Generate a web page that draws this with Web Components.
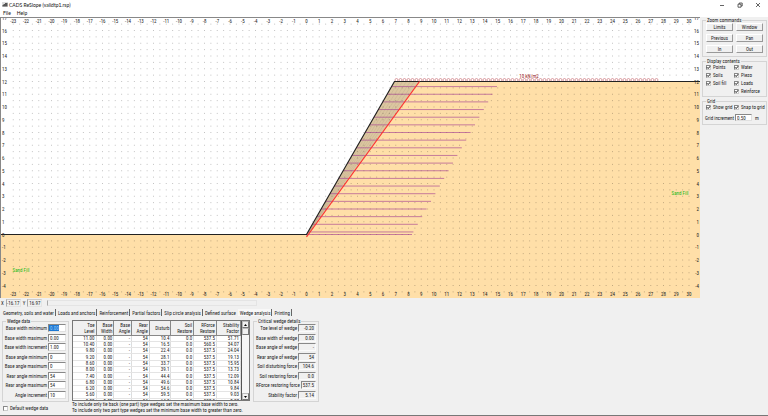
<!DOCTYPE html>
<html lang="en">
<head>
<meta charset="utf-8">
<title>CADS ReSlope (validtp1.rsp)</title>
<style>
  html, body { height: 100%; margin: 0; }
  body {
    display: flex;
    background: #f0f0f0;
    color: #222;
    font: 5px/6px "Roboto Condensed", "Open Sans Condensed", Lato, "Liberation Sans", sans-serif;
  }
</style>
</head>
<body>
<reslope-app></reslope-app>

<script>
// Small helper so every element sets up its shadow root the same way
function attach(el, html) {
  const shadow = el.attachShadow({ mode: "open" });
  shadow.innerHTML = `<style>*{box-sizing:border-box} :host{box-sizing:border-box}</style>${html}`;
  return shadow;
}

// ----- Title bar -----
class TitleBar extends HTMLElement {
  connectedCallback() {
    attach(this, `
      <style>
        :host { display: flex; align-items: center; height: 9px; background: #fff; padding: 0 4px 0 2px;
          font-family: Lato, "Open Sans", sans-serif; }
        .logo { width: 6px; height: 5px; margin-right: 1px; }
        h1 { flex: 1; margin: 0; font-size: 5px; font-weight: 400; color: #111; }
        nav { display: flex; gap: 6px; }
        button { width: 12px; height: 9px; padding: 0; border: 0; background: none; display: grid; place-items: center; }
        button svg { width: 6px; height: 6px; fill: none; stroke: #222; stroke-width: .7; }
      </style>
      <svg class="logo" viewBox="0 0 6 5"><rect width="6" height="5" fill="#ddd"/><path d="M.5 4.500V3h1V2h1.500V1H5.500V4.500Z" fill="#555"/></svg>
      <h1><slot></slot></h1>
      <nav>
        <button aria-label="Minimize"><svg viewBox="0 0 6 6"><path d="M1 3.500H5"/></svg></button>
        <button aria-label="Restore"><svg viewBox="0 0 6 6"><path d="M1 2.200H4V5.200H1ZM2.200 2V1H5.200V4H4"/></svg></button>
        <button aria-label="Close"><svg viewBox="0 0 6 6"><path d="M1 1L5 5M5 1L1 5"/></svg></button>
      </nav>
    `);
  }
}
customElements.define("title-bar", TitleBar);

// ----- Menu bar -----
class MenuBar extends HTMLElement {
  connectedCallback() {
    attach(this, `
      <style>
        :host { display: flex; gap: 4px; height: 8px; padding: 0 2px; background: #fff; align-items: center; }
        button { border: 0; background: none; padding: 0 1px; color: #111; font: 5px/8px Lato, "Open Sans", sans-serif; }
      </style>
      <button>File</button><button>Help</button>
    `);
  }
}
customElements.define("menu-bar", MenuBar);

// ----- Slope drawing -----
const UNIT = 12.75;
const OX = 306.5;
const OY = 217.5;
const px = (m) => OX + m * UNIT;
const py = (m) => OY - m * UNIT;

class SlopeCanvas extends HTMLElement {
  connectedCallback() {
    let dots = "";
    for (let y = -4.5; y <= 16.5; y += 0.5) {
      for (let x = -23; x <= 30; x += 0.5) {
        dots += `M${px(x) - 0.5} ${py(y)}h1`;
      }
    }

    let labels = "";
    for (let x = -23; x <= 30; x++) {
      labels += `<text x="${px(x)}" y="6">${x}</text><text x="${px(x)}" y="279">${x}</text>`;
    }
    for (let y = -4; y <= 17; y++) {
      const ty = py(y) + 2;
      labels += `<text x="2" y="${ty}" class="l">${y}</text><text x="699" y="${ty}" class="r">${y}</text>`;
    }

    // layers of reinforcement, 0.6 m apart, plus one at the toe
    let nails = "";
    for (let i = 0; i < 20; i++) {
      const lvl = 11.6 - i * 0.6;
      nails += `M${px(lvl * 0.575)} ${py(lvl)}H${497 - i * 4.4}`;
    }
    nails += `M${px(0)} ${py(0)}H412`;

    let load = "";
    for (let x = px(6.9); x < 656; x += 4) load += `<circle cx="${x + 2}" cy="63" r="1.500"/>`;

    // hatching of the failing wedge
    let hatch = "";
    for (let i = 1; i < 6; i++) hatch += `M${OX} ${OY + 1}L${px(6.9) + i * 4} ${py(12)}`;

    attach(this, `
      <style>
        :host { display: block; background: #fff; border-left: 1px solid #888; border-top: 1px solid #888; overflow: hidden; min-width: 0; min-height: 0; }
        svg { display: block; width: 100%; height: 100%; }
        text { font-size: 5px; text-anchor: middle; fill: #222; }
        text.l { text-anchor: start; }
        text.r { text-anchor: end; }
        text.soil { fill: #18b818; }
        text.load { fill: #981820; }
      </style>
      <svg viewBox="1 1 699 280" preserveAspectRatio="xMidYMid slice" role="img" aria-label="Slope section">
        <path d="M0 ${OY}H${OX}L${px(6.9)} ${py(12)}H701V282H0Z" fill="#ffdfa8"/>
        <path d="M${OX} ${OY}L${px(6.9)} ${py(12)}H419.500L${OX} ${OY + 2.5}Z" fill="#dcc6a0"/>
        <path d="${hatch}" stroke="#a89880" stroke-width=".4" stroke-opacity=".6"/>
        <path d="${dots}" stroke="#000" stroke-opacity=".24"/>
        <path d="${nails}" stroke="#a03890" stroke-width=".8" stroke-opacity=".75"/>
        <g fill="none" stroke="#b84850" stroke-width=".5">${load}</g>
        <path d="M0 ${OY}H${OX}L${px(6.9)} ${py(12)}H701" fill="none" stroke="#222" stroke-width="1.200"/>
        <path d="M${OX} ${OY + 2.5}L419.500 ${py(12)}" stroke="#ff3030" stroke-width="1.200"/>
        ${labels}
        <text class="soil" x="21" y="255">Sand Fill</text>
        <text class="soil" x="680" y="178">Sand Fill</text>
        <text class="load" x="529" y="61">10 kN/m2</text>
      </svg>
    `);
  }
}
customElements.define("slope-canvas", SlopeCanvas);

// ----- Etched group box -----
class GroupBox extends HTMLElement {
  connectedCallback() {
    attach(this, `
      <style>
        :host { display: block; }
        fieldset { margin: 0; padding: 0 2px 2px; border: 1px solid #d4d4d4; min-width: 0; }
        legend { padding: 0 1px; margin-left: 1px; line-height: 6px; white-space: nowrap; }
      </style>
      <fieldset><legend>${this.getAttribute("label")}</legend><slot></slot></fieldset>
    `);
  }
}
customElements.define("group-box", GroupBox);

class CheckItem extends HTMLElement {
  connectedCallback() {
    attach(this, `
      <style>
        :host { display: block; }
        label { display: flex; align-items: center; gap: 2px; white-space: nowrap; }
        input { appearance: none; width: 5px; height: 5px; margin: 0; background: #fff;
          border: 1px solid #ccc; border-top-color: #888; border-left-color: #888; }
        .box { display: grid; }
        .box > * { grid-area: 1 / 1; }
        svg { width: 5px; height: 5px; fill: none; stroke: #111; pointer-events: none; }
        input:not(:checked) + svg { visibility: hidden; }
      </style>
      <label><span class="box"><input type="checkbox" ${this.hasAttribute("checked") ? "checked" : ""}><svg viewBox="0 0 5 5"><path d="M1 2.300L2.200 3.500L4.200 1.200"/></svg></span><slot></slot></label>
    `);
  }
}
customElements.define("check-item", CheckItem);

// ----- Right side bar -----
class SideBar extends HTMLElement {
  connectedCallback() {
    attach(this, `
      <style>
        :host { display: flex; flex-direction: column; gap: 1px; padding: 0 1px 0 2px; }
        .buttons { display: grid; grid-template-columns: 1fr 1fr; gap: 3px; padding: 0 1px 1px; }
        .buttons button { height: 8px; padding: 0; font: inherit; color: inherit; background: #f0f0f0;
          border: 1px solid #999; border-top-color: #fff; border-left-color: #fff; }
        .checks { display: grid; grid-template-columns: 28px 1fr; row-gap: 2px; padding-left: 1px; }
        .inc { display: flex; align-items: center; gap: 1px; padding: 4px 0 1px; white-space: nowrap; }
        .inc input { width: 17px; height: 7px; padding: 0 1px; font: inherit; color: inherit; background: #fff;
          border: 1px solid #e0e0e0; border-top-color: #888; border-left-color: #888; }
        .inc span { margin-left: 2px; }
      </style>
      <group-box label="Zoom commands">
        <div class="buttons">
          <button>Limits</button><button>Window</button>
          <button>Previous</button><button>Pan</button>
          <button>In</button><button>Out</button>
        </div>
      </group-box>
      <group-box label="Display contents">
        <div class="checks">
          <check-item checked>Points</check-item><check-item checked>Water</check-item>
          <check-item checked>Soils</check-item><check-item checked>Piezo</check-item>
          <check-item checked>Soil fill</check-item><check-item checked>Loads</check-item>
          <span></span><check-item checked>Reinforce</check-item>
        </div>
      </group-box>
      <group-box label="Grid">
        <div class="checks">
          <check-item checked>Show grid</check-item><check-item checked>Snap to grid</check-item>
        </div>
        <div class="inc"><label for="inc">Grid increment</label><input id="inc" value="0.50"><span>m</span></div>
      </group-box>
    `);
  }
}
customElements.define("side-bar", SideBar);

// ----- Cursor read-out -----
class CoordBar extends HTMLElement {
  connectedCallback() {
    attach(this, `
      <style>
        :host { display: flex; align-items: center; gap: 2px; height: 9px; padding: 0 1px; }
        output { width: 15px; height: 8px; text-align: center; line-height: 6px; border: 1px solid #e4e4e4; border-top-color: #ccc; border-left-color: #aaa; }
        .rest { width: 210px; height: 6px; margin-left: 3px; border: 1px solid #e4e4e4; border-left-color: #aaa; }
      </style>
      <span>X</span><output>-16.17</output><span>Y</span><output>16.97</output><div class="rest"></div>
    `);
  }
}
customElements.define("coord-bar", CoordBar);

// ----- Tabs -----
class TabStrip extends HTMLElement {
  connectedCallback() {
    const tabs = ["Geometry, soils and water", "Loads and anchors", "Reinforcement", "Partial factors",
      "Slip circle analysis", "Defined surface", "Wedge analysis", "Printing"];
    attach(this, `
      <style>
        :host { display: flex; height: 11px; padding: 2px 1px; }
        button { border: 0; border-right: 1px solid #666; background: none; font: inherit; color: inherit;
          padding: 0 1px 0 2px; white-space: nowrap; }
        button.before { border-color: transparent; }
        button.on { background: #f8f8f8; }
      </style>
      ${tabs.map((t, i) => `<button role="tab" class="${i === 6 ? "on" : i === 5 ? "before" : ""}">${t}</button>`).join("")}
    `);
  }
}
customElements.define("tab-strip", TabStrip);

// ----- Wedge input form -----
class WedgeData extends HTMLElement {
  connectedCallback() {
    const fields = [["Base width minimum", "0.00"], ["Base width maximum", "0.00"], ["Base width increment", "1.00"],
      ["Base angle minimum", "0"], ["Base angle maximum", "0"], ["Rear angle minimum", "54"],
      ["Rear angle maximum", "54"], ["Angle increment", "10"]];
    attach(this, `
      <style>
        :host { display: block; }
        .rows { display: flex; flex-direction: column; justify-content: space-between; height: 75px; }
        .row { display: flex; justify-content: flex-end; align-items: center; gap: 1px; height: 8px; white-space: nowrap; }
        input { width: 18px; height: 8px; padding: 0 1px; font: inherit; color: inherit; background: #fff;
          border: 1px solid #e0e0e0; border-top-color: #888; border-left-color: #888; }
        .row:first-child input { background: linear-gradient(90deg, #1c78d4 10px, #fff 10px); color: #9cc8f4; }
        check-item { padding: 3px 1px 4px; }
      </style>
      <group-box label="Wedge data"><div class="rows">
        ${fields.map(([l, v], i) => `<div class="row"><label for="f${i}">${l}</label><input id="f${i}" value="${v}"></div>`).join("")}
      </div></group-box>
      <check-item>Default wedge data</check-item>
    `);
  }
}
customElements.define("wedge-data", WedgeData);

// ----- Results table -----
class WedgeTable extends HTMLElement {
  connectedCallback() {
    const heads = ["Toe<br>Level", "Base<br>Width", "Base<br>Angle", "Rear<br>Angle", "Disturb", "Soil<br>Restore", "RForce<br>Restore", "Stability<br>Factor"];
    const rows = [
      ["11.00", "10.4", "537.5", "51.71"], ["10.40", "16.5", "560.5", "34.07"], ["9.80", "22.4", "537.5", "24.04"],
      ["9.20", "28.1", "537.5", "19.13"], ["8.60", "33.7", "537.5", "15.95"], ["8.00", "39.1", "537.5", "13.73"],
      ["7.40", "44.4", "537.5", "12.09"], ["6.80", "49.6", "537.5", "10.84"], ["6.20", "54.6", "537.5", "9.84"],
      ["5.60", "59.5", "537.5", "9.03"], ["5.00", "64.3", "537.5", "8.37"],
    ].map(([toe, d, rf, s]) => [toe, "0.00", "-", "54", d, "0.0", rf, s]);
    attach(this, `
      <style>
        :host { display: flex; flex-direction: column; padding-top: 2px; }
        .frame { display: flex; align-items: flex-start; height: 81px; overflow: hidden; border: 1px solid #777; background: #fff; }
        table { flex: 1; height: 84px; border-collapse: collapse; table-layout: fixed; }
        th { height: 14px; font-weight: 400; line-height: 6px; background: #f0f0f0; border-right: 1px solid #888; border-bottom: 1px solid #888; }
        th:first-child { width: 23px; }
        td { border-right: 1px solid #ddd; border-bottom: 1px solid #e4e4e4; line-height: 5px; }
        th, td { padding: 0 1px 0 0; text-align: right; }
        .scroll { width: 8px; height: 100%; display: flex; flex-direction: column; background: #f6f6f6; border-left: 1px solid #555; }
        .scroll button { height: 7px; padding: 0; border: 1px solid #bbb; border-right-color: #777; border-bottom-color: #777; background: #f0f0f0; display: grid; place-items: center; }
        .scroll .down { margin-top: auto; }
        .scroll svg { width: 3px; height: 2px; display: block; }
        p { margin: 0; white-space: nowrap; }
      </style>
      <div class="frame">
        <table>
          <thead><tr>${heads.map((h) => `<th>${h}</th>`).join("")}</tr></thead>
          <tbody>${rows.map((r) => `<tr>${r.map((c) => `<td>${c}</td>`).join("")}</tr>`).join("")}</tbody>
        </table>
        <div class="scroll">
          <button aria-label="Scroll up"><svg viewBox="0 0 3 2"><path d="M0 2L1.500 0L3 2Z"/></svg></button>
          <button aria-label="Scroll position"></button>
          <button class="down" aria-label="Scroll down"><svg viewBox="0 0 3 2"><path d="M0 0L1.500 2L3 0Z"/></svg></button>
        </div>
      </div>
      <p>To include only tie back (one part) type wedges set the maximum base width to zero.</p>
      <p>To include only two part type wedges set the minimum base width to greater than zero.</p>
    `);
  }
}
customElements.define("wedge-table", WedgeTable);

// ----- Critical wedge read-outs -----
class CriticalWedge extends HTMLElement {
  connectedCallback() {
    const items = [["Toe level of wedge", "-0.20"], ["Base width of wedge", "0.00"], ["Base angle of wedge", "-"],
      ["Rear angle of wedge", "54"], ["Soil disturbing force", "104.6"], ["Soil restoring force", "0.0"],
      ["RForce restoring force", "537.5"], ["Stability factor", "5.14"]];
    attach(this, `
      <style>
        :host { display: block; }
        .rows { display: flex; flex-direction: column; justify-content: space-between; height: 75px; }
        .row { display: flex; justify-content: flex-end; align-items: center; gap: 1px; height: 8px; white-space: nowrap; }
        output { width: 18px; height: 8px; padding: 0 1px; text-align: right; line-height: 6px;
          border: 1px solid #fafafa; border-top-color: #888; border-left-color: #888; }
      </style>
      <group-box label="Critical wedge details"><div class="rows">
        ${items.map(([l, v], i) => `<div class="row"><label for="o${i}">${l}</label><output id="o${i}">${v}</output></div>`).join("")}
      </div></group-box>
    `);
  }
}
customElements.define("critical-wedge", CriticalWedge);

// ----- Whole window -----
class ReslopeApp extends HTMLElement {
  connectedCallback() {
    attach(this, `
      <style>
        :host { flex: 1; min-width: 0; display: flex; flex-direction: column; border-bottom: 1px solid #777; }
        .main { flex: 1; min-height: 0; display: grid; grid-template: minmax(0, 1fr) / minmax(0, 1fr) 68px; }
        .panel { display: grid; grid-template-columns: 67px 178px 66px; column-gap: 3px; align-items: start; padding: 0 2px; }
      </style>
      <title-bar>CADS ReSlope (validtp1.rsp)</title-bar>
      <menu-bar></menu-bar>
      <div class="main">
        <slope-canvas></slope-canvas>
        <side-bar></side-bar>
      </div>
      <coord-bar></coord-bar>
      <tab-strip></tab-strip>
      <div class="panel">
        <wedge-data></wedge-data>
        <wedge-table></wedge-table>
        <critical-wedge></critical-wedge>
      </div>
    `);
  }
}
customElements.define("reslope-app", ReslopeApp);
</script>
</body>
</html>
